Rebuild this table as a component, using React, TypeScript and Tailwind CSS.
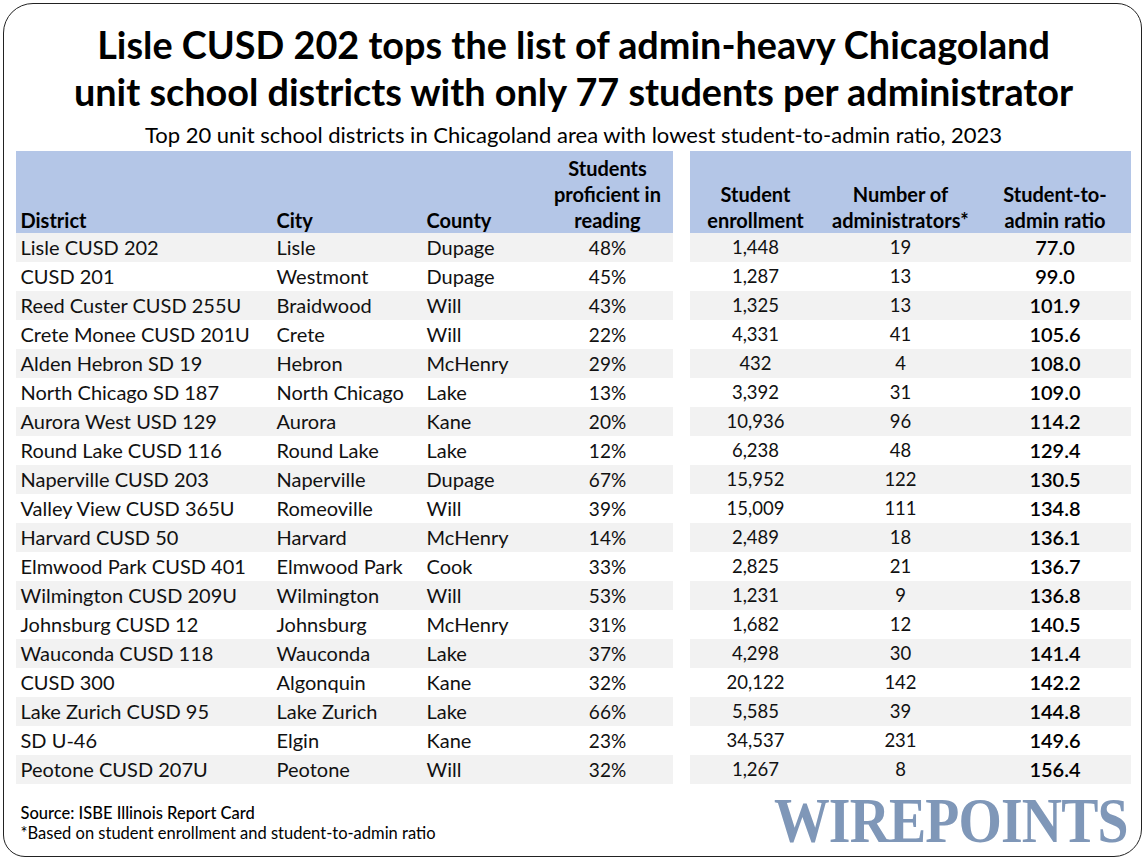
import React from "react";

const rows: string[][] = [
  ["Lisle CUSD 202", "Lisle", "Dupage", "48%", "1,448", "19", "77.0"],
  ["CUSD 201", "Westmont", "Dupage", "45%", "1,287", "13", "99.0"],
  ["Reed Custer CUSD 255U", "Braidwood", "Will", "43%", "1,325", "13", "101.9"],
  ["Crete Monee CUSD 201U", "Crete", "Will", "22%", "4,331", "41", "105.6"],
  ["Alden Hebron SD 19", "Hebron", "McHenry", "29%", "432", "4", "108.0"],
  ["North Chicago SD 187", "North Chicago", "Lake", "13%", "3,392", "31", "109.0"],
  ["Aurora West USD 129", "Aurora", "Kane", "20%", "10,936", "96", "114.2"],
  ["Round Lake CUSD 116", "Round Lake", "Lake", "12%", "6,238", "48", "129.4"],
  ["Naperville CUSD 203", "Naperville", "Dupage", "67%", "15,952", "122", "130.5"],
  ["Valley View CUSD 365U", "Romeoville", "Will", "39%", "15,009", "111", "134.8"],
  ["Harvard CUSD 50", "Harvard", "McHenry", "14%", "2,489", "18", "136.1"],
  ["Elmwood Park CUSD 401", "Elmwood Park", "Cook", "33%", "2,825", "21", "136.7"],
  ["Wilmington CUSD 209U", "Wilmington", "Will", "53%", "1,231", "9", "136.8"],
  ["Johnsburg CUSD 12", "Johnsburg", "McHenry", "31%", "1,682", "12", "140.5"],
  ["Wauconda CUSD 118", "Wauconda", "Lake", "37%", "4,298", "30", "141.4"],
  ["CUSD 300", "Algonquin", "Kane", "32%", "20,122", "142", "142.2"],
  ["Lake Zurich CUSD 95", "Lake Zurich", "Lake", "66%", "5,585", "39", "144.8"],
  ["SD U-46", "Elgin", "Kane", "23%", "34,537", "231", "149.6"],
  ["Peotone CUSD 207U", "Peotone", "Will", "32%", "1,267", "8", "156.4"],
];

export default function App() {
  return (
    <div className="w-[1147px] h-[863px] bg-white pt-[3px] pl-[3px] font-['Lato',sans-serif] text-[#111]">
      <div className="w-[1139px] h-[854px] border-[1.5px] border-[#222] rounded-tl-[30px] rounded-tr-[25px] rounded-br-[28px] rounded-bl-[22px] pl-[11.5px] pr-[9.5px] pt-[16.5px] flex flex-col">
        <div className="text-center text-[37.8px] leading-[47px] font-bold text-black whitespace-nowrap">
          <div>Lisle CUSD 202 tops the list of admin-heavy Chicagoland</div>
          <div>unit school districts with only 77 students per administrator</div>
        </div>
        <div className="text-center text-[22px] leading-[28px] mt-[6px] text-black whitespace-nowrap">
          Top 20 unit school districts in Chicagoland area with lowest student-to-admin ratio, 2023
        </div>
        <div className="flex gap-[17px] mt-[2px]">
          {/* Left table */}
          <div className="w-[657px] flex flex-col">
            <div className="h-[82px] bg-[#b4c6e7] grid grid-cols-[255px_150px_122px_130px] font-bold text-[20px] leading-[26px] text-black">
              <div className="flex items-end pl-[5px]">District</div>
              <div className="flex items-end pl-[6px]">City</div>
              <div className="flex items-end pl-[6px]">County</div>
              <div className="flex items-end justify-center text-center whitespace-nowrap">
                <div>
                  Students
                  <br />
                  proficient in
                  <br />
                  reading
                </div>
              </div>
            </div>
            {rows.map((r, i) => (
              <div
                key={i}
                className={`h-[29px] leading-[29px] grid grid-cols-[255px_150px_122px_130px] ${i % 2 === 0 ? "bg-[#f2f2f2]" : "bg-white"}`}
              >
                <div className="pl-[5px] whitespace-nowrap text-[20px]">{r[0]}</div>
                <div className="pl-[6px] whitespace-nowrap text-[20px]">{r[1]}</div>
                <div className="pl-[6px] whitespace-nowrap text-[20px]">{r[2]}</div>
                <div className="text-center text-[19px]">{r[3]}</div>
              </div>
            ))}
          </div>
          {/* Right table */}
          <div className="w-[441px] flex flex-col">
            <div className="h-[82px] bg-[#b4c6e7] grid grid-cols-[132px_158px_151px] font-bold text-[20px] leading-[26px] text-black">
              <div className="flex items-end justify-center text-center whitespace-nowrap">
                <div>
                  Student
                  <br />
                  enrollment
                </div>
              </div>
              <div className="flex items-end justify-center text-center whitespace-nowrap">
                <div>
                  Number of
                  <br />
                  administrators*
                </div>
              </div>
              <div className="flex items-end justify-center text-center whitespace-nowrap">
                <div>
                  Student-to-
                  <br />
                  admin ratio
                </div>
              </div>
            </div>
            {rows.map((r, i) => (
              <div
                key={i}
                className={`h-[29px] leading-[29px] grid grid-cols-[132px_158px_151px] text-center text-[18.5px] ${i % 2 === 0 ? "bg-[#f2f2f2]" : "bg-white"}`}
              >
                <div>{r[4]}</div>
                <div>{r[5]}</div>
                <div className="font-semibold text-black text-[20px]">{r[6]}</div>
              </div>
            ))}
          </div>
        </div>
        <div className="flex justify-between items-start mt-[19px]">
          <div className="pl-[5px] text-[16.5px] leading-[20px] text-black whitespace-nowrap">
            <div className="font-medium">Source: ISBE Illinois Report Card</div>
            <div>*Based on student enrollment and student-to-admin ratio</div>
          </div>
          <div className="mr-[4px] -mt-[7px] h-[50px] flex items-center">
            <div className="font-['Liberation_Serif',serif] font-bold text-[63px] leading-[50px] text-[#7f97b8] scale-x-[0.885] origin-right tracking-[-1px]">
              WIREPOINTS
            </div>
          </div>
        </div>
      </div>
    </div>
  );
}
